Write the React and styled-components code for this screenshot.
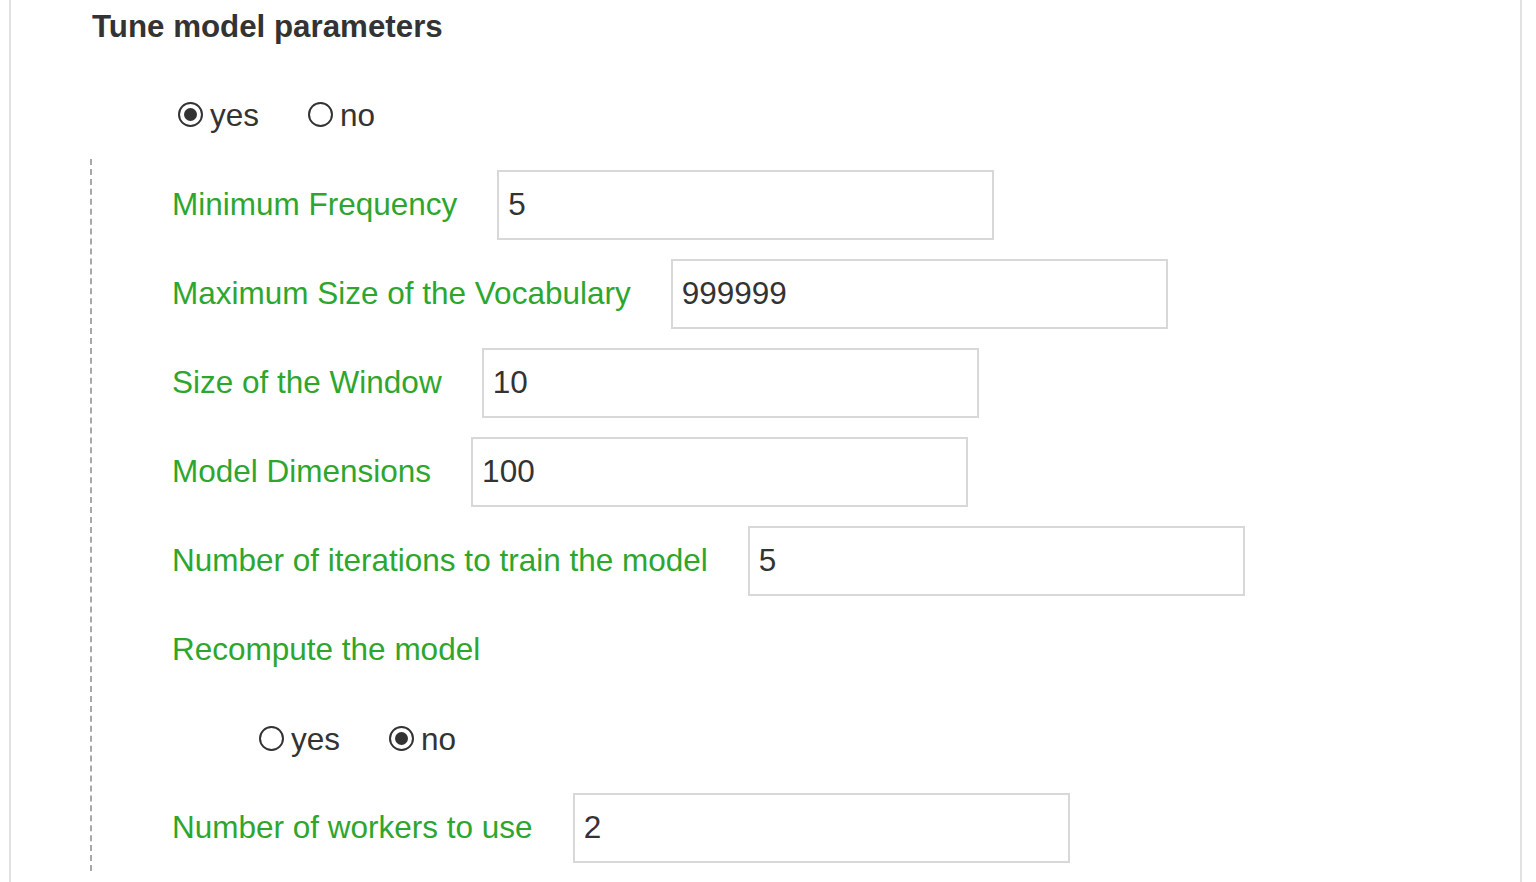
import React from "react";
import styled, { createGlobalStyle } from "styled-components";

const Global = createGlobalStyle`
  html, body { margin: 0; padding: 0; background: #fff; }
  body { font-family: "Liberation Sans", Arial, sans-serif; overflow: hidden; }
`;

const Panel = styled.div`
  margin-left: 9px;
  width: 1513px;
  height: 882px;
  border-left: 2px solid #e2e2e2;
  border-right: 2px solid #e2e2e2;
  box-sizing: border-box;
  padding: 9px 0 0 79px;
`;

const Title = styled.h3`
  margin: 0 0 0 2px;
  font-size: 31.3px;
  line-height: 36px;
  font-weight: bold;
  color: #333;
`;

const RadioGroup = styled.div`
  display: flex;
  align-items: center;
  gap: 49px;
  height: 36px;
  margin-left: ${(p) => p.$indent}px;
  margin-top: ${(p) => p.$top || 0}px;
`;

const RadioOption = styled.label`
  display: flex;
  align-items: center;
  gap: 7px;
  font-size: 31.5px;
  color: #333;
  line-height: 36px;
`;

const RadioDot = styled.span`
  width: 25px;
  height: 25px;
  box-sizing: border-box;
  border: 2px solid #333;
  border-radius: 50%;
  display: flex;
  align-items: center;
  justify-content: center;
  margin-top: -2px;
  &::after {
    content: "";
    width: 13px;
    height: 13px;
    border-radius: 50%;
    background: ${(p) => (p.$checked ? "#333" : "transparent")};
  }
`;

const Section = styled.div`
  margin-top: 26px;
  border-left: 2px dashed #a8a8a8;
  padding: 11px 0 0 80px;
  height: 712px;
  box-sizing: border-box;
`;

const Row = styled.div`
  display: flex;
  align-items: center;
  gap: 40px;
  height: 70px;
  margin-bottom: 19px;
`;

const Label = styled.span`
  font-size: 31.5px;
  line-height: 36px;
  margin-top: -3px;
  color: #2ea62e;
  white-space: nowrap;
`;

const Input = styled.input`
  width: 497px;
  height: 70px;
  box-sizing: border-box;
  border: 2px solid #d8d8d8;
  padding: 0 9px 1px;
  font-family: "Liberation Sans", Arial, sans-serif;
  font-size: 31.5px;
  color: #333;
  outline: none;
  background: #fff;
`;

const SubRadioRow = styled.div`
  height: 70px;
  margin-bottom: 19px;
  display: flex;
  align-items: center;
`;

function Radios({ value, indent, top }) {
  return (
    <RadioGroup $indent={indent} $top={top}>
      <RadioOption>
        <RadioDot $checked={value === "yes"} />
        yes
      </RadioOption>
      <RadioOption>
        <RadioDot $checked={value === "no"} />
        no
      </RadioOption>
    </RadioGroup>
  );
}

const fields = [
  ["Minimum Frequency", "5"],
  ["Maximum Size of the Vocabulary", "999999"],
  ["Size of the Window", "10"],
  ["Model Dimensions", "100"],
  ["Number of iterations to train the model", "5"],
];

export default function App() {
  return (
    <>
      <Global />
      <Panel>
        <Title>Tune model parameters</Title>
        <Radios value="yes" indent={88} top={52} />
        <Section>
          {fields.map(([l, v]) => (
            <Row key={l}>
              <Label>{l}</Label>
              <Input defaultValue={v} />
            </Row>
          ))}
          <Row>
            <Label>Recompute the model</Label>
          </Row>
          <SubRadioRow>
            <Radios value="no" indent={87} />
          </SubRadioRow>
          <Row>
            <Label>Number of workers to use</Label>
            <Input defaultValue="2" />
          </Row>
        </Section>
      </Panel>
    </>
  );
}
